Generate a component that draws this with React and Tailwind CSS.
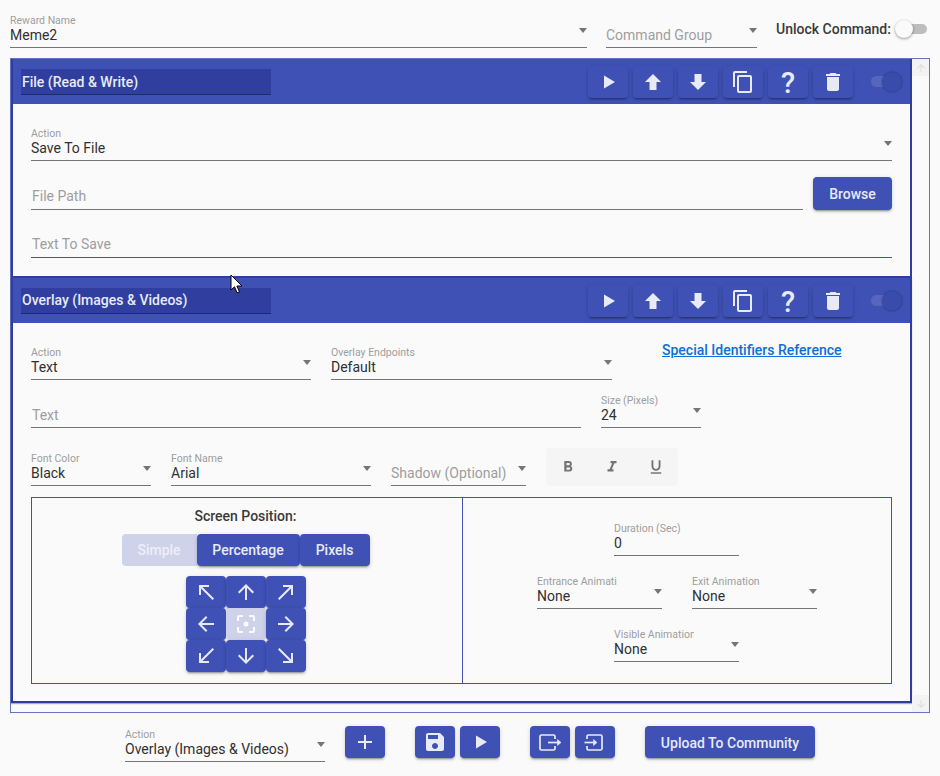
import { Fragment } from "react";

const raised = "shadow-[0_3px_1px_-2px_rgba(0,0,0,0.2),0_2px_2px_0_rgba(0,0,0,0.14),0_1px_5px_0_rgba(0,0,0,0.12)]";

const Icon = ({ d, size = 24, className = "" }) => (
  <svg width={size} height={size} viewBox="0 0 24 24" fill="currentColor" className={className}>
    <path d={d} />
  </svg>
);

const StrokeIcon = ({ box, shaft, head }) => (
  <svg width="24" height="24" viewBox="0 0 24 24" fill="none" stroke="currentColor" strokeWidth="1.7">
    <path d={box} />
    <path d={shaft} />
    <path d={head} fill="currentColor" strokeWidth="0.6" />
  </svg>
);

const paths = {
  play: "M8 5.5v13L19 12z",
  up: "M12 4l8 8h-4.5v8h-7v-8H4z",
  down: "M12 20l-8-8h4.5V4h7v8H20z",
  trash: "M6 19c0 1.1.9 2 2 2h8c1.1 0 2-.9 2-2V7H6v12zM19 4h-3.5l-1-1h-5l-1 1H5v2h14V4z",
  copy: "M16 1H4c-1.1 0-2 .9-2 2v14h2V3h12V1zm3 4H8c-1.1 0-2 .9-2 2v14c0 1.1.9 2 2 2h11c1.1 0 2-.9 2-2V7c0-1.1-.9-2-2-2zm0 16H8V7h11v14z",
  add: "M19 13h-6v6h-2v-6H5v-2h6V5h2v6h6v2z",
  save: "M17 3H5c-1.11 0-2 .9-2 2v14c0 1.1.89 2 2 2h14c1.1 0 2-.9 2-2V7l-4-4zm-5 16c-1.66 0-3-1.34-3-3s1.34-3 3-3 3 1.34 3 3-1.34 3-3 3zm3-10H5V5h10v4z",
  arrow: "M20 11H7.83l5.59-5.59L12 4l-8 8 8 8 1.41-1.41L7.83 13H20v-2z",
  diagonal: "M5 15h2V8.41L18.59 20 20 18.59 8.41 7H15V5H5v10z",
  focus: "M5 15H3v4c0 1.1.9 2 2 2h4v-2H5v-4zM5 5h4V3H5c-1.1 0-2 .9-2 2v4h2V5zm14-2h-4v2h4v4h2V5c0-1.1-.9-2-2-2zm0 16h-4v2h4c1.1 0 2-.9 2-2v-4h-2v4zM12 9.5a2.5 2.5 0 1 0 0 5 2.5 2.5 0 0 0 0-5z",
  bold: "M15.6 10.79c.97-.67 1.65-1.77 1.65-2.79 0-2.26-1.75-4-4-4H7v14h7.04c2.09 0 3.71-1.7 3.71-3.79 0-1.52-.86-2.82-2.15-3.42zM10 6.5h3c.83 0 1.5.67 1.5 1.5s-.67 1.5-1.5 1.5h-3v-3zm3.5 9H10v-3h3.5c.83 0 1.5.67 1.5 1.5s-.67 1.5-1.5 1.5z",
  italic: "M10 4v3h2.21l-3.42 8H6v3h8v-3h-2.21l3.42-8H18V4z",
  underline: "M12 17c3.31 0 6-2.69 6-6V3h-2.5v8c0 1.93-1.57 3.5-3.5 3.5S8.5 12.93 8.5 11V3H6v8c0 3.31 2.69 6 6 6zm-7 2v2h14v-2H5z",
};

const Field = ({ label, value, placeholder, select = true, clip = false, focused = false, className = "", placeholderClass = "-mt-px pl-px" }) => (
  <div className={`relative h-[34px] shrink-0 border-b ${focused ? "border-[#3f51b5]" : "border-[#757575]"} ${className}`}>
    <div className={`h-[13px] overflow-hidden pt-px text-[10.5px] leading-[12px] whitespace-nowrap text-[#9e9e9e] ${clip ? "w-[80px]" : ""}`}>
      {label}
    </div>
    {value ? (
      <div className="-mt-px text-[14px] leading-[18px] text-[#303030]">{value}</div>
    ) : (
      <div className={`text-[14px] leading-[18px] text-[#9e9e9e] ${placeholderClass}`}>{placeholder}</div>
    )}
    {select && (
      <div className="absolute right-0 bottom-[14px] h-0 w-0 border-x-[4px] border-t-[5px] border-x-transparent border-t-[#757575]" />
    )}
  </div>
);

const HeaderButton = ({ d, children }) => (
  <button type="button" className={`flex h-[32px] w-[40px] items-center justify-center rounded-[4px] bg-[#3f51b5] text-[#e8eaf6] ${raised}`}>
    {d ? <Icon d={d} /> : children}
  </button>
);

const CardHeader = ({ title, titleClass = "" }) => (
  <div className="flex h-[45px] items-center bg-[#3f51b5] pr-[8px] pl-[8px]">
    <div className={`flex h-[26px] w-[250px] items-center border-b border-[#1f2a6e] bg-[#303f9f] pl-px text-[14px] font-medium text-[#e8eaf6] ${titleClass}`}>
      {title}
    </div>
    <div className="ml-auto flex items-center gap-[5px]">
      <HeaderButton d={paths.play} />
      <HeaderButton d={paths.up} />
      <HeaderButton d={paths.down} />
      <HeaderButton d={paths.copy} />
      <HeaderButton>
        <span className="pt-[3px] text-[29px] leading-none font-medium">?</span>
      </HeaderButton>
      <HeaderButton d={paths.trash} />
    </div>
    <div className="relative ml-[18px] flex h-[20px] w-[31px] items-center">
      <div className="h-[11px] w-[26px] rounded-full bg-[#5766bd]" />
      <div className="absolute top-0 right-0 h-[20px] w-[20px] rounded-full bg-[#3a4bab] shadow-[0_0_2px_rgba(0,0,0,0.45)]" />
    </div>
  </div>
);

const PrimaryButton = ({ children, className = "", disabled = false }) => (
  <button
    type="button"
    className={`flex h-[32px] items-center justify-center rounded-[4px] text-[14px] font-medium ${
      disabled ? "bg-[#cfd3ea] text-[#eceef8]" : `bg-[#3f51b5] text-[#e8eaf6] ${raised}`
    } ${className}`}
  >
    {children}
  </button>
);

const positionCells = [
  { d: paths.diagonal },
  { d: paths.arrow, className: "rotate-90" },
  { d: paths.diagonal, className: "rotate-90" },
  { d: paths.arrow },
  { d: paths.focus, disabled: true },
  { d: paths.arrow, className: "rotate-180" },
  { d: paths.diagonal, className: "-rotate-90" },
  { d: paths.arrow, className: "-rotate-90" },
  { d: paths.diagonal, className: "rotate-180" },
];

const ScrollArrow = ({ down = false }) => (
  <div className="flex h-[17px] w-[17px] items-center justify-center bg-[#f3f3f3] text-[#dcdcdc]">
    <Icon d={paths.arrow} size={12} className={down ? "-rotate-90" : "rotate-90"} />
  </div>
);

const App = () => {
  return (
    <div className="relative h-[776px] w-[940px] overflow-hidden bg-[#fafafa] font-['Roboto',sans-serif] text-[#303030]">
      <div className="flex h-[48px] items-start pt-[14px] pl-[10px]">
        <Field label="Reward Name" value="Meme2" className="w-[577px]" />
        <Field placeholder="Command Group" placeholderClass="-mt-px" className="ml-[19px] w-[151px]" />
        <div className="ml-[19px] flex h-[30px] items-center text-[14px] font-medium text-[#3a3a3a]">Unlock Command:</div>
        <div className="relative mt-[5px] ml-[4px] flex h-[20px] w-[32px] items-center justify-end">
          <div className="h-[10px] w-[28px] rounded-full bg-[#bdbdbd]" />
          <div className="absolute top-px left-0 h-[18px] w-[18px] rounded-full bg-[#fafafa] shadow-[0_1px_3px_rgba(0,0,0,0.4)]" />
        </div>
      </div>

      <div className="mx-[10px] mt-[10px] flex h-[655px] w-[920px] border border-[#6573c3]">
        <div className="w-[901px]">
          <section className="border-x-2 border-b-2 border-[#2f3e9e]">
            <CardHeader title="File (Read & Write)" titleClass="pt-[2px]" />
            <div className="h-[172px] px-[18px] pt-[23px]">
              <Field label="Action" value="Save To File" />
              <div className="mt-[15px] flex items-end gap-[10px]">
                <Field placeholder="File Path" placeholderClass="-mt-[2px] pl-px" select={false} className="flex-1" />
                <PrimaryButton className="h-[33px] w-[79px] pt-[2px]">Browse</PrimaryButton>
              </div>
              <Field placeholder="Text To Save" placeholderClass="-mt-[2px] pl-px" select={false} focused className="mt-[14px]" />
            </div>
          </section>

          <section className="border-x-2 border-b-2 border-[#2f3e9e] shadow-[0_1px_1px_rgba(0,0,0,0.3)]">
            <CardHeader title="Overlay (Images & Videos)" />
            <div className="h-[378px] px-[18px] pt-[23px]">
              <div className="flex items-start">
                <Field label="Action" value="Text" className="w-[280px]" />
                <Field label="Overlay Endpoints" value="Default" className="ml-[20px] w-[281px]" />
                <a className="-mt-[4px] ml-[50px] text-[14px] leading-[16px] font-medium text-[#0b6fd6] underline">
                  Special Identifiers Reference
                </a>
              </div>

              <div className="mt-[14px] flex gap-[20px]">
                <Field placeholder="Text" select={false} className="w-[550px]" />
                <Field label="Size (Pixels)" value="24" className="w-[100px]" />
              </div>

              <div className="mt-[20px] flex items-end gap-[20px]">
                <Field label="Font Color" value="Black" className="w-[120px]" />
                <Field label="Font Name" value="Arial" className="w-[200px]" />
                <Field placeholder="Shadow (Optional)" placeholderClass="-mt-px" className="w-[135px]" />
                <div className="flex h-[38px] w-[132px] items-center rounded-[4px] bg-[#f5f5f5] text-[#757575]">
                  {[paths.bold, paths.italic, paths.underline].map((d) => (
                    <div key={d} className="flex w-[44px] justify-center">
                      <Icon d={d} size={18} />
                    </div>
                  ))}
                </div>
              </div>

              <div className="mt-[11px] flex h-[187px] w-[861px] border border-[#3f51b5]">
                <div className="flex w-[431px] flex-col items-center border-r border-[#3f51b5] pt-[8px] pr-[3px]">
                  <div className="text-[14px] leading-[20px] font-medium text-[#3a3a3a]">Screen Position:</div>
                  <div className="mt-[8px] flex">
                    <PrimaryButton disabled className="w-[75px] rounded-r-none">Simple</PrimaryButton>
                    <PrimaryButton className="w-[103px]">Percentage</PrimaryButton>
                    <PrimaryButton className="w-[70px]">Pixels</PrimaryButton>
                  </div>
                  <div className="mt-[10px] grid w-[120px] grid-cols-3">
                    {positionCells.map((cell, index) => (
                      <Fragment key={index}>
                        <PrimaryButton disabled={cell.disabled} className={cell.disabled ? "text-[#fafafa]" : ""}>
                          <Icon d={cell.d} className={cell.className} />
                        </PrimaryButton>
                      </Fragment>
                    ))}
                  </div>
                </div>

                <div className="flex flex-1 flex-col items-center pt-[24px] pr-px">
                  <Field label="Duration (Sec)" value="0" select={false} className="w-[125px]" />
                  <div className="mt-[19px] ml-px flex gap-[30px]">
                    <Field label="Entrance Animation" value="None" clip className="w-[125px]" />
                    <Field label="Exit Animation" value="None" clip className="w-[125px]" />
                  </div>
                  <Field label="Visible Animation" value="None" clip className="mt-[19px] w-[125px]" />
                </div>
              </div>
            </div>
          </section>
        </div>

        <div className="flex w-[17px] flex-col justify-between">
          <ScrollArrow />
          <ScrollArrow down />
        </div>
      </div>

      <div className="flex items-start justify-center pt-[13px]">
        <Field label="Action" value="Overlay (Images & Videos)" className="mt-[2px] w-[200px]" />
        <PrimaryButton className="ml-[20px] w-[40px] shadow-[0_2px_2px_rgba(0,0,0,0.5)]"><Icon d={paths.add} /></PrimaryButton>
        <PrimaryButton className="ml-[30px] w-[40px]"><Icon d={paths.save} /></PrimaryButton>
        <PrimaryButton className="ml-[5px] w-[40px]"><Icon d={paths.play} /></PrimaryButton>
        <PrimaryButton className="ml-[30px] w-[40px]">
          <StrokeIcon
            box="M17 9V6.5A1.5 1.5 0 0 0 15.5 5h-12A1.5 1.5 0 0 0 2 6.5v12A1.5 1.5 0 0 0 3.5 20h12a1.5 1.5 0 0 0 1.5-1.5V16"
            shaft="M10 12.5h10"
            head="M19.5 9.5l3.5 3-3.5 3z"
          />
        </PrimaryButton>
        <PrimaryButton className="ml-[5px] w-[40px]">
          <StrokeIcon
            box="M4 9V6.5A1.5 1.5 0 0 1 5.5 5h12A1.5 1.5 0 0 1 19 6.5v12a1.5 1.5 0 0 1-1.5 1.5h-12A1.5 1.5 0 0 1 4 18.5V16"
            shaft="M1.5 12.5h9"
            head="M10.5 9.5l3.5 3-3.5 3z"
          />
        </PrimaryButton>
        <PrimaryButton className="ml-[30px] w-[170px] pt-[2px]">Upload To Community</PrimaryButton>
      </div>

      {/* mouse pointer caught in the capture */}
      <svg width="14" height="20" viewBox="0 0 14 20" className="absolute top-[274px] left-[230px]">
        <path d="M1 1v15l3.5-3.2 2.6 6 2.4-1-2.6-5.8H12z" fill="#fff" stroke="#000" strokeWidth="1" />
      </svg>
    </div>
  );
};

export default App;
